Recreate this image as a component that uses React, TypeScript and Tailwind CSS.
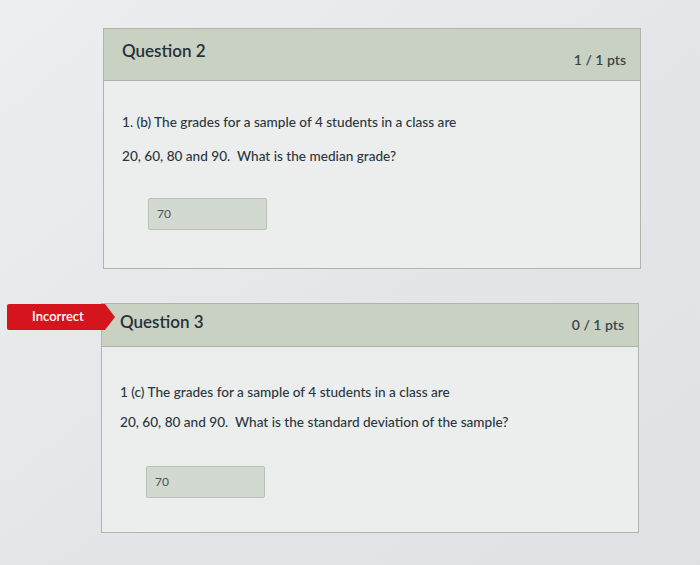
import React from "react";

const font = { fontFamily: "Lato, 'Open Sans', sans-serif" };

function QuestionCard({
  title,
  points,
  lines,
  answer,
  headerClass,
  pointsClass,
  gapClass,
  inputClass,
  bodyClass,
  badge,
}: {
  title: string;
  points: string;
  lines: string[];
  answer: string;
  headerClass: string;
  pointsClass: string;
  gapClass: string;
  inputClass: string;
  bodyClass: string;
  badge?: boolean;
}) {
  return (
    <div className="relative w-[538px] border border-[#aeb5ae] bg-[#eceeed]">
      {badge && (
        <div className="absolute left-[-95px] top-[0px] flex h-[26px] items-center">
          <div className="flex h-[26px] w-[98px] items-center justify-center rounded-l-[2px] bg-[#d5141d] pl-[4px] text-[13px] font-semibold text-white">
            Incorrect
          </div>
          <div className="h-0 w-0 border-y-[13px] border-l-[10px] border-y-transparent border-l-[#d5141d]" />
        </div>
      )}
      <div
        className={`flex items-start justify-between border-b border-[#aab2a9] bg-[#c9d1c3] pl-[18px] pr-[14px] ${headerClass}`}
      >
        <span className="text-[17px] font-semibold leading-[24px] text-[#26323a]">{title}</span>
        <span className={`text-[14px] font-semibold leading-[20px] text-[#3a464d] ${pointsClass}`}>
          {points}
        </span>
      </div>
      <div className={`px-[18px] ${bodyClass}`}>
        <p className="text-[13.6px] font-medium leading-[18px] text-[#2a3640]">{lines[0]}</p>
        <p className={`text-[13.6px] font-medium leading-[18px] text-[#2a3640] ${gapClass}`}>
          {lines[1]}
        </p>
        <div
          className={`ml-[26px] flex h-[32px] w-[119px] items-center rounded-[2px] border border-[#b9c0b8] bg-[#d2d9d1] pl-[8px] text-[12px] text-[#4a5458] ${inputClass}`}
        >
          {answer}
        </div>
      </div>
    </div>
  );
}

export default function App() {
  return (
    <div
      className="h-[565px] w-[700px] overflow-hidden bg-gradient-to-br from-[#eceef0] via-[#e4e7e9] to-[#dfe2e4] pl-[103px] pt-[28px]"
      style={font}
    >
      <QuestionCard
        title="Question 2"
        points="1 / 1 pts"
        lines={[
          "1. (b) The grades for a sample of 4 students in a class are",
          "20, 60, 80 and 90.\u00a0 What is the median grade?",
        ]}
        answer="70"
        headerClass="h-[52px] pt-[10px]"
        pointsClass="mt-[11px]"
        gapClass="mt-[16px]"
        inputClass="mt-[33px]"
        bodyClass="pt-[32px] pb-[38px]"
      />
      <div className="mt-[34px] -ml-[2px]">
        <QuestionCard
          title="Question 3"
          points="0 / 1 pts"
          lines={[
            "1 (c) The grades for a sample of 4 students in a class are",
            "20, 60, 80 and 90.\u00a0 What is the standard deviation of the sample?",
          ]}
          answer="70"
          headerClass="h-[43px] pt-[6px]"
          pointsClass="mt-[5px]"
          gapClass="mt-[12px]"
          inputClass="mt-[35px]"
          bodyClass="pt-[36px] pb-[34px]"
          badge
        />
      </div>
    </div>
  );
}
